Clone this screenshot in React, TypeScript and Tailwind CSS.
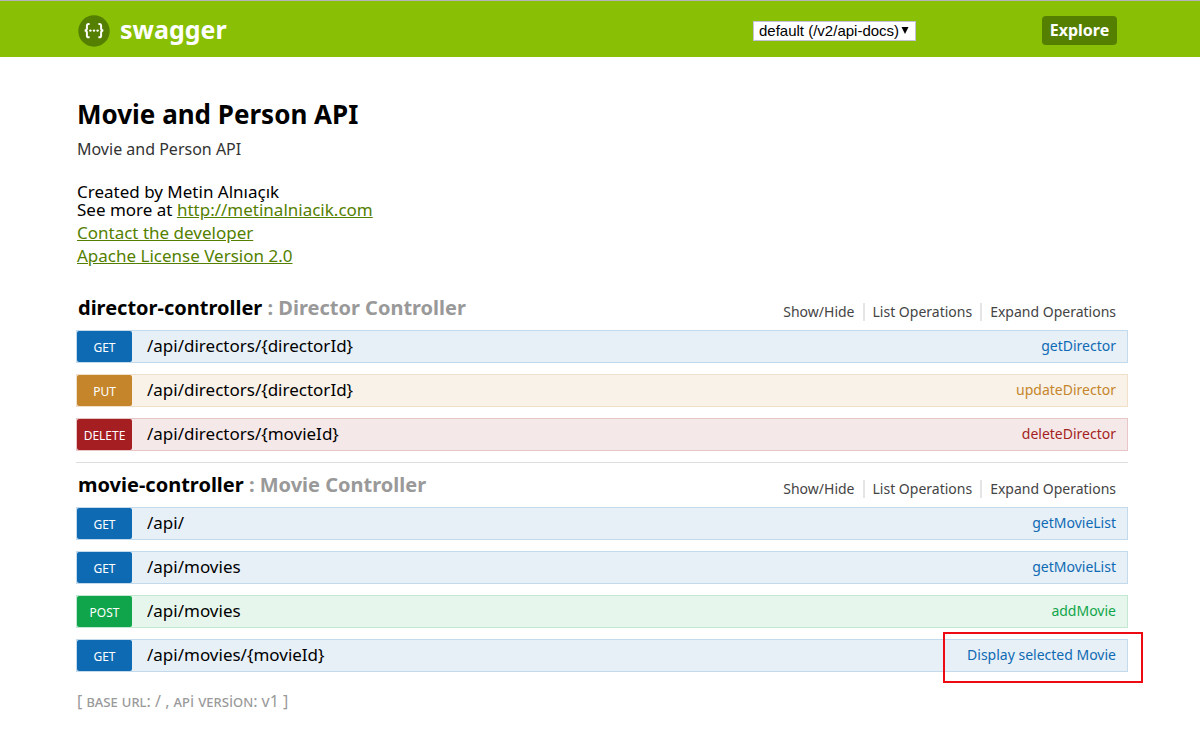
import { useState } from 'react';
import clsx from 'clsx';

type Method = 'GET' | 'PUT' | 'POST' | 'DELETE';

interface Operation {
  method: Method;
  path: string;
  summary: string;
  highlighted?: boolean;
}

interface Controller {
  name: string;
  description: string;
  operations: Operation[];
}

const controllers: Controller[] = [
  {
    name: 'director-controller',
    description: 'Director Controller',
    operations: [
      { method: 'GET', path: '/api/directors/{directorId}', summary: 'getDirector' },
      { method: 'PUT', path: '/api/directors/{directorId}', summary: 'updateDirector' },
      { method: 'DELETE', path: '/api/directors/{movieId}', summary: 'deleteDirector' },
    ],
  },
  {
    name: 'movie-controller',
    description: 'Movie Controller',
    operations: [
      { method: 'GET', path: '/api/', summary: 'getMovieList' },
      { method: 'GET', path: '/api/movies', summary: 'getMovieList' },
      { method: 'POST', path: '/api/movies', summary: 'addMovie' },
      {
        method: 'GET',
        path: '/api/movies/{movieId}',
        summary: 'Display selected Movie',
        highlighted: true,
      },
    ],
  },
];

const methodStyles: Record<Method, { row: string; badge: string; text: string }> = {
  GET: { row: 'bg-[#e7f0f7] border-[#c3d9ec]', badge: 'bg-[#0f6ab4]', text: 'text-[#0f6ab4]' },
  PUT: { row: 'bg-[#f9f2e9] border-[#f0e0ca]', badge: 'bg-[#c5862b]', text: 'text-[#c5862b]' },
  POST: { row: 'bg-[#e7f6ec] border-[#c3e8d1]', badge: 'bg-[#10a54a]', text: 'text-[#10a54a]' },
  DELETE: { row: 'bg-[#f5e8e8] border-[#e8c6c7]', badge: 'bg-[#a41e22]', text: 'text-[#a41e22]' },
};

function SwaggerLogo() {
  return (
    <svg width="32" height="32" viewBox="0 0 32 32" fill="none" aria-hidden="true">
      <circle cx="16" cy="16" r="15.7" fill="#547f00" />
      <g stroke="#fff" strokeWidth="2">
        <path d="M11.6 8.9h-.9c-1.3 0-1.8.7-1.8 1.9v2.7c0 1.3-.7 2-2.2 2.1 1.5.1 2.2.8 2.2 2.1v2.7c0 1.2.5 1.9 1.8 1.9h.9" />
        <path d="M20.4 8.9h.9c1.3 0 1.8.7 1.8 1.9v2.7c0 1.3.7 2 2.2 2.1-1.5.1-2.2.8-2.2 2.1v2.7c0 1.2-.5 1.9-1.8 1.9h-.9" />
      </g>
      <g fill="#fff">
        <circle cx="12.4" cy="15.6" r="1.2" />
        <circle cx="16" cy="15.6" r="1.2" />
        <circle cx="19.6" cy="15.6" r="1.2" />
      </g>
    </svg>
  );
}

function Header() {
  const [spec, setSpec] = useState('default');

  return (
    <header className="flex h-[57px] items-center border-t border-[#b5b3b9] bg-[#89bf04] pl-[78px] pr-[83px] pb-px pt-1">
      <a href="#swagger" className="flex items-center gap-[10px] text-[25px] font-bold leading-8 text-white">
        <SwaggerLogo />
        <span className="pb-[3px] leading-[30px]">swagger</span>
      </a>
      <div className="relative ml-auto">
        <select
          aria-label="API specification"
          value={spec}
          onChange={(e) => setSpec(e.target.value)}
          className="block h-5 w-[163px] appearance-none border border-[#c4c0d8] bg-white pl-[5px] font-['Liberation_Sans',sans-serif] text-[15px] leading-[18px] text-black"
        >
          <option value="default">default (/v2/api-docs)</option>
        </select>
        <svg
          className="pointer-events-none absolute right-[7px] top-[6px]"
          width="8"
          height="7"
          viewBox="0 0 8 7"
          aria-hidden="true"
        >
          <path d="M0.5 0h7L4 7z" fill="#000" />
        </svg>
      </div>
      <button
        type="button"
        className="ml-[126px] h-[29px] w-[75px] rounded bg-[#547f00] pb-px text-[16px] font-bold leading-6 text-white"
      >
        Explore
      </button>
    </header>
  );
}

function ApiInfo() {
  return (
    <section className="pl-px text-[17px] leading-[18px] text-black">
      <h1 className="text-[26px] font-bold leading-8">Movie and Person API</h1>
      <p className="mt-2 text-[16px] leading-[22px] text-[#333333]">Movie and Person API</p>
      <div className="mt-[23px]">Created by Metin Alnıaçık</div>
      <div>
        See more at{' '}
        <a href="http://metinalniacik.com" className="text-[#547f00] underline">
          http://metinalniacik.com
        </a>
      </div>
      <div className="mt-[2px] leading-[23px]">
        <a href="#contact" className="text-[#547f00] underline">
          Contact the developer
        </a>
      </div>
      <div className="leading-[23px]">
        <a href="#license" className="text-[#547f00] underline">
          Apache License Version 2.0
        </a>
      </div>
    </section>
  );
}

function OperationRow({ operation }: { operation: Operation }) {
  const styles = methodStyles[operation.method];

  return (
    <li className={clsx('relative flex h-[33px] items-center border pb-[2px] pr-[11px]', styles.row)}>
      <a
        href="#operation"
        className={clsx(
          'h-[31px] w-[55px] self-start rounded-xs pt-px text-center text-[12px] leading-8 text-white',
          styles.badge
        )}
      >
        {operation.method}
      </a>
      <a href="#operation" className="ml-[15px] text-[17px] leading-6 text-black">
        {operation.path}
      </a>
      <a href="#operation" className={clsx('ml-auto text-[14px] leading-5', styles.text)}>
        {operation.summary}
      </a>
      {operation.highlighted && (
        <div className="pointer-events-none absolute -right-4 -top-2 h-[51px] w-[200px] border-2 border-[#ee0a12]" />
      )}
    </li>
  );
}

function ControllerSection({ controller }: { controller: Controller }) {
  return (
    <section className="border-b border-[#dddddd] pb-[11px] pt-[6px] last:border-b-0">
      <div className="flex items-center justify-between pl-[2px]">
        <h2 className="text-[20px] font-bold leading-8 text-[#999999]">
          <a href="#controller" className="text-black">
            {controller.name}
          </a>{' '}
          : {controller.description}
        </h2>
        <ul className="mt-[7px] flex pr-3 text-[14px] leading-[18px] text-[#444444]">
          <li className="border-r-2 border-[#e5e5e5] pr-2">
            <a href="#toggle">Show/Hide</a>
          </li>
          <li className="border-r-2 border-[#e5e5e5] px-2">
            <a href="#list">List Operations</a>
          </li>
          <li className="pl-2">
            <a href="#expand">Expand Operations</a>
          </li>
        </ul>
      </div>
      <ul className="mt-[6px] flex flex-col gap-[11px]">
        {controller.operations.map((operation, idx) => (
          <OperationRow key={idx} operation={operation} />
        ))}
      </ul>
    </section>
  );
}

function ApiFooter() {
  return (
    <footer className="mt-[6px] pl-px text-[16px] leading-6 text-[#999999]">
      [ <span className="[font-variant:small-caps]">base url</span>: / ,{' '}
      {/* the i keeps its dot, so it stays out of the small caps */}
      <span className="[font-variant:small-caps]">
        ap<span className="[font-variant:normal]">i</span> vers
        <span className="[font-variant:normal]">i</span>on
      </span>
      : v1 ]
    </footer>
  );
}

export default function App() {
  return (
    <div className="min-h-screen bg-white font-['Noto_Sans',sans-serif]">
      <Header />
      <main className="pb-10 pl-[76px] pr-[72px] pt-[41px]">
        <ApiInfo />
        <div className="mt-[19px]">
          {controllers.map((controller) => (
            <ControllerSection key={controller.name} controller={controller} />
          ))}
        </div>
        <ApiFooter />
      </main>
    </div>
  );
}
